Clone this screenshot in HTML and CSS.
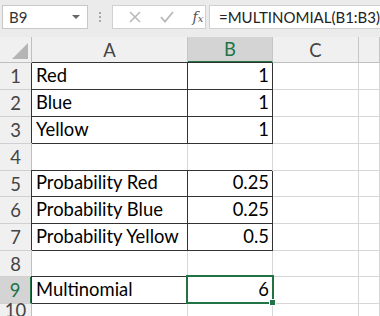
FILE: index.html
```html
<!DOCTYPE html>
<html lang="en">
<head>
    <meta charset="UTF-8">
    <title>MULTINOMIAL</title>
    <link rel="stylesheet" href="styles.css">
</head>
<body>
    <div class="formula-bar">
        <div class="name-box">
            <span>B9</span>
            <span class="caret"></span>
        </div>
        <div class="grip"><i></i><i></i><i></i></div>
        <div class="fx-box">
            <svg class="btn" width="14" height="14" viewBox="0 0 14 14">
                <path d="M2 2 L12 12 M12 2 L2 12" stroke="#b9b9b9" stroke-width="1.6" fill="none"/>
            </svg>
            <svg class="btn" width="16" height="14" viewBox="0 0 16 14">
                <path d="M2 7 L6 11.5 L14 2" stroke="#b9b9b9" stroke-width="1.8" fill="none"/>
            </svg>
            <span class="fx"><i>f</i><small>x</small></span>
        </div>
        <div class="formula">=MULTINOMIAL(B1:B3)</div>
    </div>

    <div class="sheet">
        <!-- header -->
        <div class="corner"><span class="tri"></span></div>
        <div class="col-head">A</div>
        <div class="col-head active">B</div>
        <div class="col-head">C</div>
        <div class="col-head"></div>

        <div class="row-head">1</div>
        <div class="cell box">Red</div>
        <div class="cell box num">1</div>
        <div class="cell"></div>
        <div class="cell"></div>

        <div class="row-head">2</div>
        <div class="cell box">Blue</div>
        <div class="cell box num">1</div>
        <div class="cell"></div>
        <div class="cell"></div>

        <div class="row-head">3</div>
        <div class="cell box">Yellow</div>
        <div class="cell box num">1</div>
        <div class="cell"></div>
        <div class="cell"></div>

        <div class="row-head">4</div>
        <div class="cell"></div>
        <div class="cell"></div>
        <div class="cell"></div>
        <div class="cell"></div>

        <div class="row-head">5</div>
        <div class="cell box">Probability Red</div>
        <div class="cell box num">0.25</div>
        <div class="cell"></div>
        <div class="cell"></div>

        <div class="row-head">6</div>
        <div class="cell box">Probability Blue</div>
        <div class="cell box num">0.25</div>
        <div class="cell"></div>
        <div class="cell"></div>

        <div class="row-head">7</div>
        <div class="cell box">Probability Yellow</div>
        <div class="cell box num">0.5</div>
        <div class="cell"></div>
        <div class="cell"></div>

        <div class="row-head">8</div>
        <div class="cell"></div>
        <div class="cell"></div>
        <div class="cell"></div>
        <div class="cell"></div>

        <div class="row-head active">9</div>
        <div class="cell box">Multinomial</div>
        <div class="cell box num selected">6</div>
        <div class="cell"></div>
        <div class="cell"></div>

        <div class="row-head">10</div>
        <div class="cell"></div>
        <div class="cell"></div>
        <div class="cell"></div>
        <div class="cell"></div>
    </div>
</body>
</html>
```

FILE: styles.css
```css
body {
    margin: 0;
    font-family: Lato, "Noto Sans", sans-serif;
    background: #ffffff;
    overflow: hidden;
}
.formula-bar {
    height: 37px;
    background: #ebebeb;
    display: flex;
    align-items: flex-start;
    padding-top: 5px;
    box-sizing: border-box;
}
.name-box {
    margin-left: 2px;
    width: 90px;
    height: 24px;
    box-sizing: border-box;
    background: #fff;
    border: 1px solid #c8c8c8;
    display: flex;
    align-items: center;
    justify-content: space-between;
    padding: 0 7px 0 6px;
    font-size: 15px;
    color: #333;
}
.caret {
    width: 0;
    height: 0;
    border-left: 4px solid transparent;
    border-right: 4px solid transparent;
    border-top: 4px solid #666;
}
.grip {
    width: 26px;
    height: 24px;
    display: flex;
    flex-direction: column;
    align-items: center;
    justify-content: center;
    gap: 2px;
}
.grip i {
    width: 2px;
    height: 2px;
    background: #a8a8a8;
}
.fx-box {
    width: 98px;
    height: 24px;
    box-sizing: border-box;
    background: #fff;
    border: 1px solid #d0d0d0;
    display: flex;
    align-items: center;
    padding-left: 15px;
    gap: 17px;
}
.fx {
    font-family: "DejaVu Serif", "Liberation Serif", serif;
    color: #555;
    font-size: 14px;
}
.fx small {
    font-size: 10px;
    font-style: italic;
}
.formula {
    margin-left: 3px;
    flex: 1;
    height: 24px;
    box-sizing: border-box;
    background: #fff;
    border: 1px solid #d0d0d0;
    border-right: none;
    padding-left: 9px;
    font-size: 15px;
    line-height: 22px;
    color: #222;
}

.sheet {
    display: grid;
    grid-template-columns: 32px 156px 85px 86px 1fr;
    grid-template-rows: 26px 27px 27px 27px 27px 26px 27px 27px 26px 27px 13px;
    font-size: 18.4px;
    color: #000;
}
.sheet > div {
    box-sizing: border-box;
    border-right: 1px solid #d6d6d6;
    border-bottom: 1px solid #d6d6d6;
}
.corner {
    background: #f0f0f0;
    position: relative;
    border-right-color: #bfbfbf !important;
    border-bottom-color: #bfbfbf !important;
}
.tri {
    position: absolute;
    right: 3px;
    bottom: 3px;
    width: 0;
    height: 0;
    border-left: 16px solid transparent;
    border-bottom: 16px solid #b5b5b5;
}
.col-head {
    background: #f0f0f0;
    border-right-color: #c6c6c6 !important;
    border-bottom-color: #bfbfbf !important;
    display: flex;
    align-items: center;
    justify-content: center;
    color: #444;
}
.col-head.active {
    background: #d4d4d4;
    color: #217346;
    border-bottom: 2px solid #217346 !important;
}
.row-head {
    background: #f0f0f0;
    border-right-color: #bfbfbf !important;
    border-bottom-color: #d0d0d0 !important;
    display: flex;
    align-items: center;
    justify-content: center;
    color: #444;
}
.row-head.active {
    background: #d4d4d4;
    color: #217346;
    border-right: 2px solid #217346 !important;
}
.cell {
    display: flex;
    align-items: flex-end;
    padding: 0 3px 3px 4px;
    white-space: nowrap;
}
.cell.box {
    border-right-color: #333 !important;
    border-bottom-color: #333 !important;
    box-shadow: -1px -1px 0 #333;
}
.cell.num {
    justify-content: flex-end;
}
.cell.selected {
    position: relative;
    z-index: 1;
}
.cell.selected::before {
    content: "";
    position: absolute;
    top: -2px;
    left: -2px;
    right: -2px;
    bottom: -1px;
    border: 2px solid #217346;
}
.cell.selected::after {
    content: "";
    position: absolute;
    right: -4px;
    bottom: -3px;
    width: 5px;
    height: 5px;
    background: #217346;
    border: 1px solid #fff;
}
```
